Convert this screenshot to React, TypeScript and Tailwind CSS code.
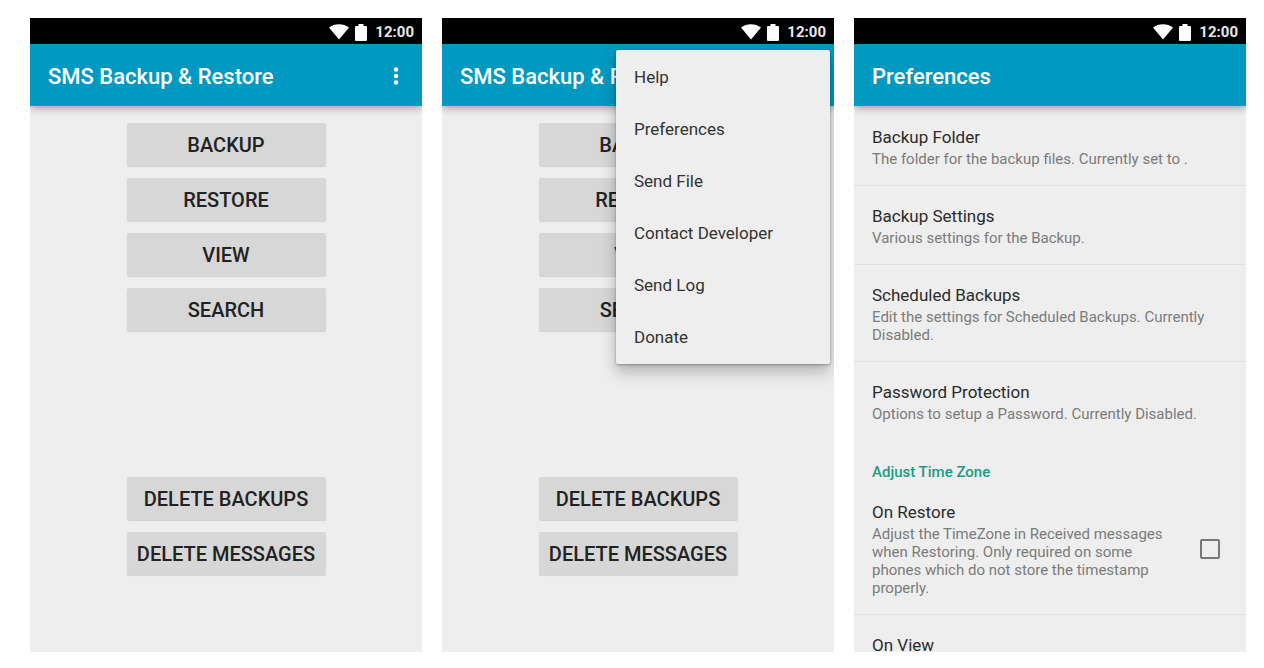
import type { ReactNode } from 'react';

const mainActions = ['Backup', 'Restore', 'View', 'Search'];
const deleteActions = ['Delete Backups', 'Delete Messages'];
const menuItems = ['Help', 'Preferences', 'Send File', 'Contact Developer', 'Send Log', 'Donate'];

const preferences = [
  { title: 'Backup Folder', summary: 'The folder for the backup files. Currently set to .' },
  { title: 'Backup Settings', summary: 'Various settings for the Backup.' },
  { title: 'Scheduled Backups', summary: 'Edit the settings for Scheduled Backups. Currently Disabled.' },
  { title: 'Password Protection', summary: 'Options to setup a Password. Currently Disabled.' },
];

function StatusBar() {
  return (
    <div className="flex h-[26px] shrink-0 items-center justify-end bg-black pr-2 pt-0.5 text-[#e8e8e8]">
      <svg className="h-4 w-5" viewBox="0 0 20 16" fill="#ffffff" aria-hidden="true">
        <path d="M0 3.600C2.800 1.400 6.200.2 10 .2s7.200 1.200 10 3.400L10 15.600z" />
      </svg>
      <svg className="ml-1.5 h-[17px] w-3" viewBox="0 0 12 17" fill="#ffffff" aria-hidden="true">
        <path d="M3.500 0h5v2H11a1 1 0 0 1 1 1v13a1 1 0 0 1-1 1H1a1 1 0 0 1-1-1V3a1 1 0 0 1 1-1h2.500z" />
      </svg>
      <span className="ml-2 text-[15px] font-bold leading-5">12:00</span>
    </div>
  );
}

function Phone({ title, action, children }: { title: string; action?: ReactNode; children: ReactNode }) {
  return (
    <section className="relative flex min-h-0 min-w-0 flex-col overflow-hidden bg-[#eeeeee]">
      <StatusBar />
      <header className="z-10 flex h-[62px] shrink-0 items-center justify-between bg-[#0099c1] pl-[18px] pr-4 pt-1 shadow-[0_2px_8px_rgba(0,0,0,0.35)]">
        <h1 className="whitespace-nowrap text-[22px] font-medium leading-7 text-white">{title}</h1>
        {action}
      </header>
      {children}
    </section>
  );
}

function OverflowButton() {
  return (
    <button type="button" aria-label="More options" className="flex h-10 w-5 items-center justify-center text-white">
      <svg className="h-5 w-1.5" viewBox="0 0 6 20" fill="currentColor" aria-hidden="true">
        <circle cx="3" cy="2.500" r="2.200" />
        <circle cx="3" cy="9" r="2.200" />
        <circle cx="3" cy="15.500" r="2.200" />
      </svg>
    </button>
  );
}

function ActionButton({ label }: { label: string }) {
  return (
    <button
      type="button"
      className="h-[43px] w-[199px] rounded-xs bg-[#d7d7d7] text-xl font-medium uppercase text-[#222222] shadow-[0_1px_1px_rgba(0,0,0,0.12)]"
    >
      {label}
    </button>
  );
}

function HomeActions() {
  return (
    <main className="flex flex-col items-center pt-[17px]">
      <div className="flex flex-col gap-3">
        {mainActions.map((label) => (
          <ActionButton key={label} label={label} />
        ))}
      </div>
      <div className="mt-[146px] flex flex-col gap-3">
        {deleteActions.map((label) => (
          <ActionButton key={label} label={label} />
        ))}
      </div>
    </main>
  );
}

function OverflowMenu() {
  return (
    <ul className="absolute right-1 top-8 z-20 w-[214px] rounded-xs bg-[#eeeeee] pt-0.5 shadow-[0_8px_16px_rgba(0,0,0,0.25),0_1px_3px_rgba(0,0,0,0.3)]">
      {menuItems.map((item) => (
        <li key={item}>
          <button type="button" className="h-[52px] w-full pl-[18px] text-left text-[17px] text-[#333333]">
            {item}
          </button>
        </li>
      ))}
    </ul>
  );
}

function PreferenceText({ title, summary }: { title: string; summary: string }) {
  return (
    <>
      <span className="block text-[17px] leading-[25px] text-[#2b2b2b]">{title}</span>
      <span className="block text-[15px] leading-[18px] text-[#7b7b7b]">{summary}</span>
    </>
  );
}

function PreferenceList() {
  return (
    <main className="min-h-0 overflow-hidden pt-px">
      <ul>
        {preferences.map((pref) => (
          <li key={pref.title} className="border-b border-[#e0e0e0] px-[18px] pb-[17px] pt-[18px] last:border-b-0">
            <PreferenceText title={pref.title} summary={pref.summary} />
          </li>
        ))}
      </ul>

      <h2 className="px-[18px] pt-[22px] text-[15px] font-medium leading-5 text-[#1a9c85]">Adjust Time Zone</h2>
      <div className="flex items-center justify-between border-b border-[#e0e0e0] pb-[17px] pl-[18px] pr-[26px] pt-[18px]">
        <label htmlFor="tz-restore" className="w-[304px]">
          <PreferenceText
            title="On Restore"
            summary="Adjust the TimeZone in Received messages when Restoring. Only required on some phones which do not store the timestamp properly."
          />
        </label>
        <input
          id="tz-restore"
          type="checkbox"
          className="size-5 shrink-0 appearance-none rounded-xs border-2 border-[#777777] checked:bg-[#1a9c85]"
        />
      </div>
      <div className="px-[18px] pt-[18px]">
        <span className="block text-[17px] leading-[25px] text-[#2b2b2b]">On View</span>
      </div>
    </main>
  );
}

export default function App() {
  return (
    <div className="grid h-screen grid-cols-3 grid-rows-1 gap-5 bg-white pb-4 pl-[30px] pr-[18px] pt-[18px] font-[Roboto,sans-serif]">
      <Phone title="SMS Backup & Restore" action={<OverflowButton />}>
        <HomeActions />
      </Phone>

      <Phone title="SMS Backup & Restore">
        <HomeActions />
        <OverflowMenu />
      </Phone>

      <Phone title="Preferences">
        <PreferenceList />
      </Phone>
    </div>
  );
}
